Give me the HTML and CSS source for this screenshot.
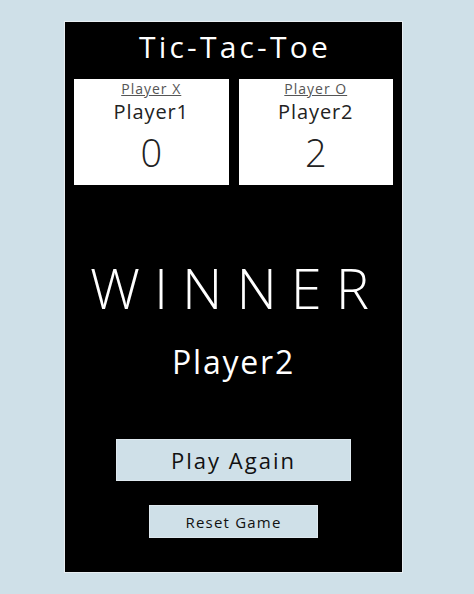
FILE: index.html
```html
<!DOCTYPE html>
<html>
<head>
<meta charset="utf-8">
<link rel="stylesheet" href="styles.css">
</head>
<body>
<div class="panel">
  <h1 class="title">Tic-Tac-Toe</h1>
  <div class="cards">
    <div class="card">
      <div class="label">Player X</div>
      <div class="name">Player1</div>
      <div class="score">0</div>
    </div>
    <div class="card">
      <div class="label">Player O</div>
      <div class="name">Player2</div>
      <div class="score">2</div>
    </div>
  </div>
  <div class="winner">WINNER</div>
  <div class="winner-name">Player2</div>
  <button class="btn btn-play">Play Again</button>
  <button class="btn btn-reset">Reset Game</button>
</div>
</body>
</html>
```

FILE: styles.css
```css
html, body {
  margin: 0;
  padding: 0;
  background: #cfe0e8;
  font-family: "Open Sans", "Liberation Sans", sans-serif;
}
.panel {
  box-sizing: border-box;
  width: 339px;
  margin: 21px 0 0 64px;
  background: #000;
  border: 1px solid #e8eef2;
  padding: 0 9px 34px;
  display: flex;
  flex-direction: column;
  align-items: center;
  color: #fff;
}
.title {
  margin: 5px 0 12px;
  padding-left: 3px;
  font-size: 30px;
  line-height: 40px;
  font-weight: 400;
  letter-spacing: 3.2px;
}
.cards {
  display: flex;
  gap: 10px;
  width: 100%;
}
.card {
  flex: 1;
  height: 106px;
  background: #fff;
  color: #222;
  display: flex;
  flex-direction: column;
  align-items: center;
}
.label {
  margin-top: 2px;
  font-size: 14px;
  line-height: 16px;
  color: #555;
  text-decoration: underline;
  letter-spacing: 1px;
}
.name {
  margin-top: 4px;
  font-size: 20px;
  line-height: 22px;
  letter-spacing: 0.9px;
}
.score {
  margin-top: 7px;
  font-size: 38px;
  line-height: 44px;
  font-weight: 300;
}
.winner {
  margin-top: 70px;
  font-size: 56px;
  line-height: 64px;
  letter-spacing: 14px;
  padding-left: 6px;
  font-weight: 300;
}
.winner-name {
  margin-top: 23px;
  font-size: 32px;
  line-height: 40px;
  font-weight: 400;
  letter-spacing: 1.8px;
}
.btn {
  box-sizing: border-box;
  background: #cfe0e8;
  color: #111;
  border: 1px solid #dfe9ef;
  font-family: inherit;
  padding: 0;
}
.btn-play {
  margin-top: 57px;
  width: 235px;
  height: 42px;
  font-size: 22px;
  letter-spacing: 2px;
}
.btn-reset {
  margin-top: 24px;
  width: 169px;
  height: 33px;
  font-size: 15px;
  font-weight: 500;
  letter-spacing: 1.2px;
}
```
